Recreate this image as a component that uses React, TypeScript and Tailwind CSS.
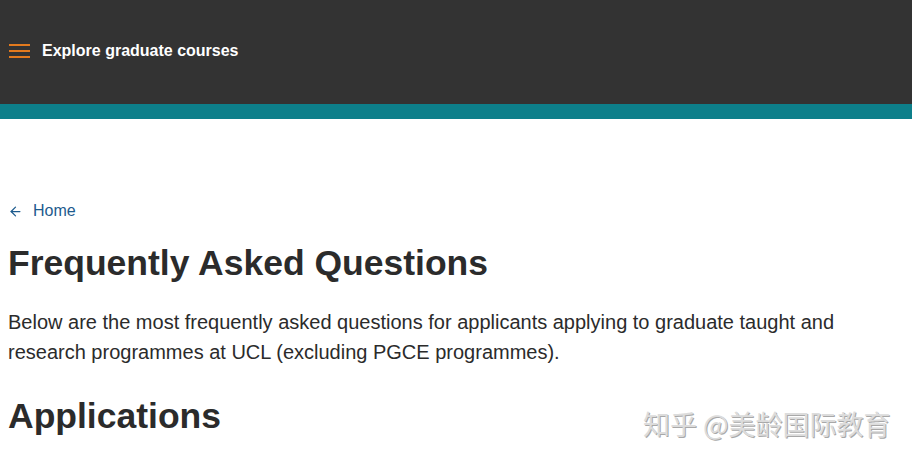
import { ArrowLeft } from "lucide-react";

const App = () => {
  return (
    <div className="relative w-[912px] h-[461px] overflow-hidden bg-white font-['Liberation_Sans',Arial,sans-serif]">
      <header className="h-[104px] bg-[#333333] flex items-center pl-[9px] pb-[2px]">
        <svg width="22" height="16" viewBox="0 0 22 16" className="mr-[11px]">
          <rect x="0" y="1" width="21" height="2" fill="#e37a1e" />
          <rect x="0" y="7" width="21" height="2" fill="#e37a1e" />
          <rect x="0" y="13" width="21" height="2" fill="#e37a1e" />
        </svg>
        <span className="text-white font-bold text-[16px]">Explore graduate courses</span>
      </header>
      <div className="h-[15px] bg-[#0d7f8a]" />

      <main className="px-[8px] pt-[80px]">
        <a className="flex items-center gap-[10px] text-[#1d5b8e] text-[16px]">
          <ArrowLeft size={15} strokeWidth={2} />
          <span>Home</span>
        </a>
        <h1 className="mt-[19px] text-[#2b2b2b] font-bold text-[35.5px] leading-[42px]">
          Frequently Asked Questions
        </h1>
        <p className="mt-[23px] text-[#2b2b2b] text-[20px] leading-[30px]">
          Below are the most frequently asked questions for applicants applying to graduate taught and
          <br />
          research programmes at UCL (excluding PGCE programmes).
        </p>
        <h2 className="mt-[28px] text-[#2b2b2b] font-bold text-[35.5px] leading-[42px]">Applications</h2>
      </main>

      <div className="absolute left-[643px] top-[404px] text-[27px] text-[#dcdcdc] font-['Noto_Sans_CJK_SC',sans-serif] [text-shadow:1px_1px_0_#a8a8a8]">
        知乎 @美龄国际教育
      </div>
    </div>
  );
};

export default App;
